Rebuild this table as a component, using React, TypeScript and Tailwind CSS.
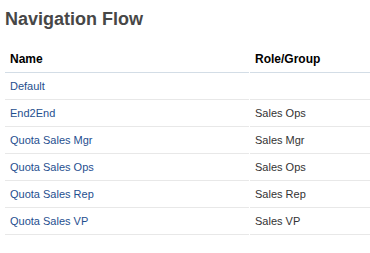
import React from "react";

const rows = [
  { name: "Default", role: "" },
  { name: "End2End", role: "Sales Ops" },
  { name: "Quota Sales Mgr", role: "Sales Mgr" },
  { name: "Quota Sales Ops", role: "Sales Ops" },
  { name: "Quota Sales Rep", role: "Sales Rep" },
  { name: "Quota Sales VP", role: "Sales VP" },
];

export default function App() {
  return (
    <div className="w-[370px] h-[253px] bg-white overflow-hidden font-['Liberation_Sans',Arial,sans-serif]">
      <h1 className="pl-[5px] pt-[8px] text-[18px] leading-[22px] font-bold text-[#474747]">
        Navigation Flow
      </h1>
      <table className="mt-[16px] ml-[4px] w-[367px] border-separate border-spacing-x-[1px] border-spacing-y-0 text-left">
        <thead>
          <tr className="h-[27px]">
            <th className="w-[244px] pl-[5px] text-[12px] font-bold text-black border-b border-[#d3dde6]">
              Name
            </th>
            <th className="pl-[5px] text-[12px] font-bold text-black border-b border-[#d3dde6]">
              Role/Group
            </th>
          </tr>
        </thead>
        <tbody>
          {rows.map((row, idx) => (
            <tr key={idx} className="h-[27px]">
              <td className="pl-[5px] text-[11px] text-[#1f4f8f] border-b border-[#e8e8e8]">
                {row.name}
              </td>
              <td className="pl-[5px] text-[11px] text-[#333333] border-b border-[#e8e8e8]">
                {row.role}
              </td>
            </tr>
          ))}
        </tbody>
      </table>
    </div>
  );
}
